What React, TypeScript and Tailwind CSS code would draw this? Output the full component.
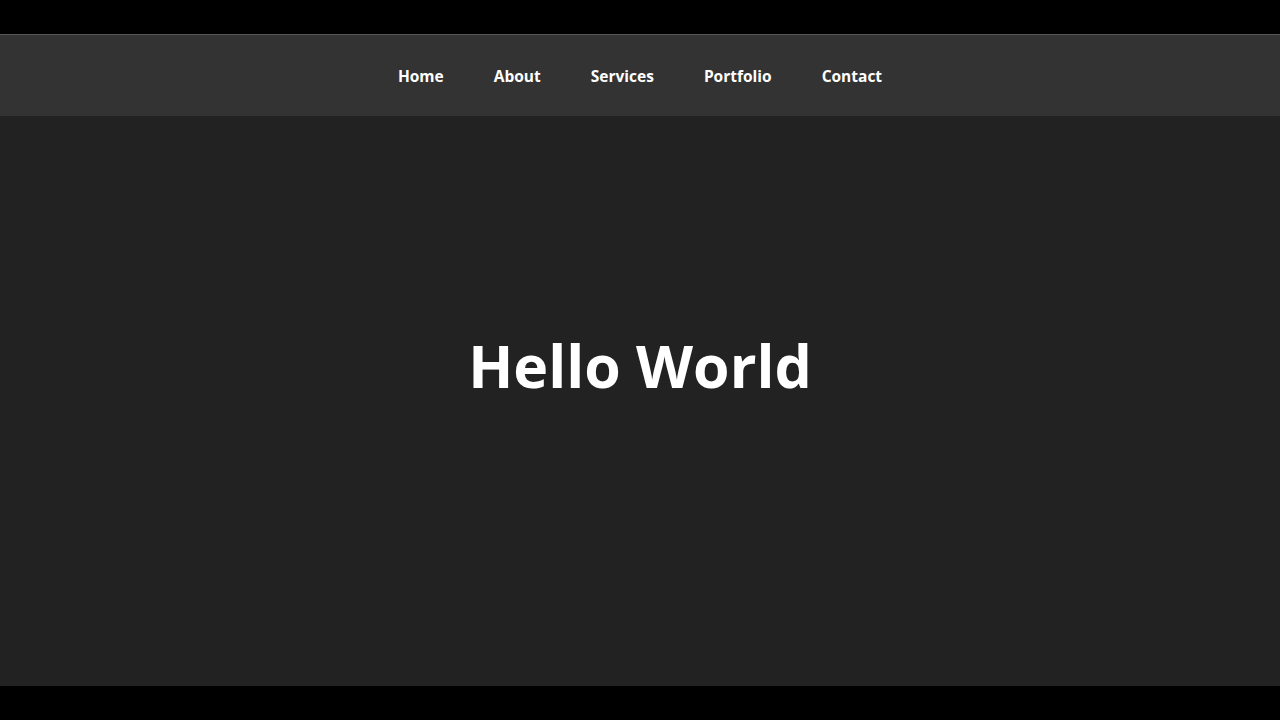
export default function App() {
  const links = ["Home", "About", "Services", "Portfolio", "Contact"];

  return (
    <div
      className="w-full h-[720px] bg-black flex flex-col"
      style={{ fontFamily: '"Open Sans", "Noto Sans", sans-serif' }}
    >
      <div className="h-[34px] bg-black" />
      <nav className="h-[82px] bg-[#333333] border-t border-[#555555] flex items-center justify-center pt-[2px]">
        <ul className="flex items-center gap-[50px]">
          {links.map((link) => (
            <li key={link}>
              <a href="#" className="text-white font-bold text-[15.5px]">
                {link}
              </a>
            </li>
          ))}
        </ul>
      </nav>
      <main className="h-[570px] bg-[#222222] flex items-center justify-center pb-[72px]">
        <h1 className="text-white font-bold text-[59px] leading-none">
          Hello World
        </h1>
      </main>
      <div className="flex-1 bg-black" />
    </div>
  );
}
